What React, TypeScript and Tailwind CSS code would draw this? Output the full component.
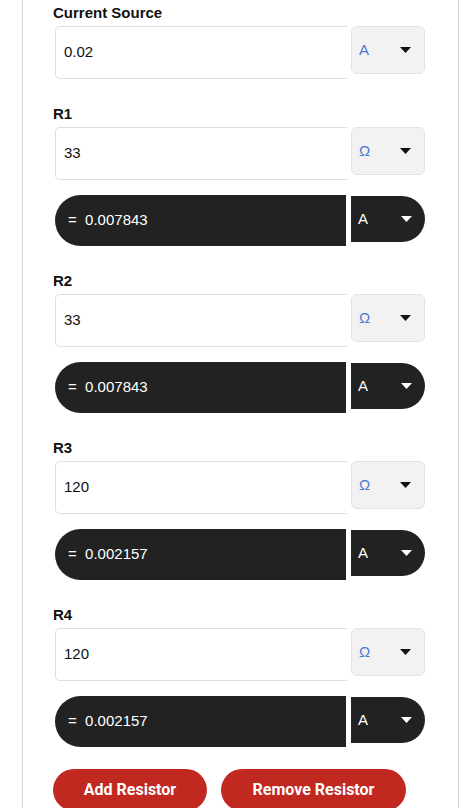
import React from 'react';

interface Resistor {
  name: string;
  ohms: string;
  current: string;
}

const resistors: Resistor[] = [
  { name: 'R1', ohms: '33', current: '0.007843' },
  { name: 'R2', ohms: '33', current: '0.007843' },
  { name: 'R3', ohms: '120', current: '0.002157' },
  { name: 'R4', ohms: '120', current: '0.002157' },
];

function Caret({ light }: { light?: boolean }) {
  return (
    <svg width="11" height="6" viewBox="0 0 11 6" className="shrink-0">
      <path d="M0 0 L11 0 L5.5 6 Z" fill={light ? '#ffffff' : '#111111'} />
    </svg>
  );
}

function InputRow({ value, unit }: { value: string; unit: string }) {
  return (
    <div className="flex items-start gap-[4px] ml-[2px]">
      <div className="flex-1 h-[53px] flex items-center pl-[8px] bg-white border border-r-0 border-[#dedede] rounded-l-[5px] text-[15px] text-[#111]">
        {value}
      </div>
      <div className="w-[74px] h-[48px] flex items-center justify-between pl-[7px] pr-[13px] bg-[#f2f2f2] border border-[#e2e2e2] rounded-[6px] text-[15px] text-[#4a78cf]">
        <span>{unit}</span>
        <Caret />
      </div>
    </div>
  );
}

function ResultRow({ value }: { value: string }) {
  return (
    <div className="flex items-start gap-[5px] ml-[2px] mt-[15px]">
      <div className="flex-1 h-[51px] flex items-center pl-[13px] bg-[#222222] rounded-l-full text-[15px] text-white">
        =&nbsp;&nbsp;{value}
      </div>
      <div className="w-[74px] h-[46px] mt-[1px] flex items-center justify-between pl-[7px] pr-[13px] bg-[#222222] rounded-r-full text-[15px] text-white">
        <span>A</span>
        <Caret light />
      </div>
    </div>
  );
}

export default function App() {
  return (
    <div className="w-[474px] h-[808px] overflow-hidden bg-white font-['Liberation_Sans',Arial,sans-serif]">
      <div className="ml-[22px] w-[437px] min-h-[830px] border-x border-[#d4d4d4] pl-[30px] pr-[33px]">
        <div>
          <div className="h-[26px] leading-[26px] text-[15px] font-bold text-[#111]">Current Source</div>
          <InputRow value="0.02" unit="A" />
        </div>

        {resistors.map((r) => (
          <div key={r.name} className="mt-[22px]">
            <div className="h-[26px] leading-[26px] text-[15px] font-bold text-[#111]">{r.name}</div>
            <InputRow value={r.ohms} unit="Ω" />
            <ResultRow value={r.current} />
          </div>
        ))}

        <div className="flex gap-[14px] mt-[22px] font-['Roboto',sans-serif]">
          <button className="w-[154px] h-[42px] rounded-full bg-[#c1281f] text-white text-[16px] font-bold">
            Add Resistor
          </button>
          <button className="w-[185px] h-[42px] rounded-full bg-[#c1281f] text-white text-[16px] font-bold">
            Remove Resistor
          </button>
        </div>
      </div>
    </div>
  );
}
